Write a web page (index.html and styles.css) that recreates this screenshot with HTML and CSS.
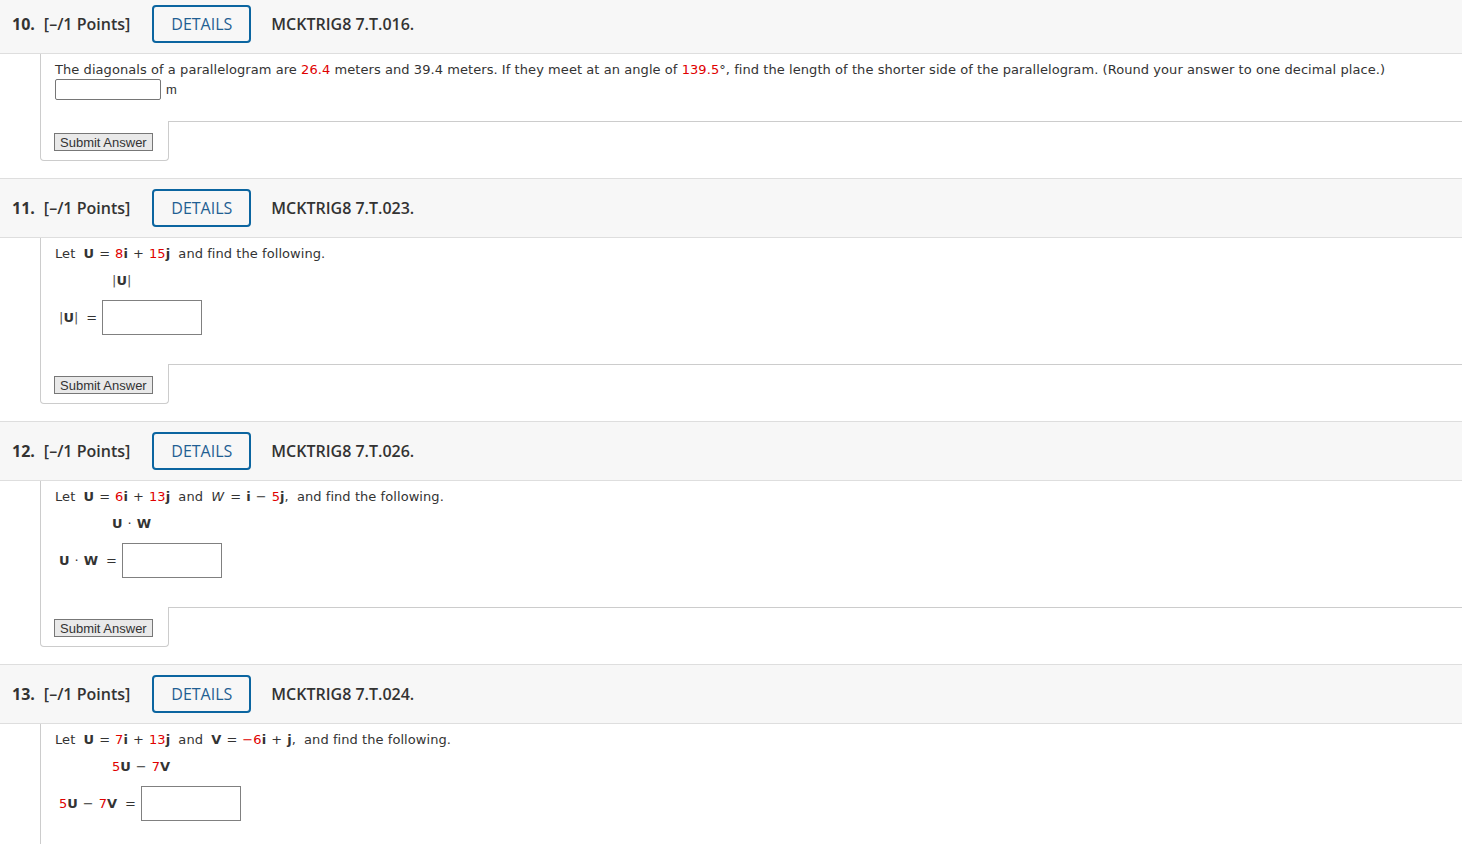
FILE: index.html
```html
<!DOCTYPE html>
<html lang="en">
<head>
    <meta charset="UTF-8">
    <meta name="viewport" content="width=device-width, initial-scale=1.0">
    <title>Assignment</title>
    <link rel="stylesheet" href="styles.css">
</head>
<body>
    <div class="question first">
        <div class="q-head">
            <span class="q-num">10.</span>
            <span class="q-points">[–/1 Points]</span>
            <button class="details">DETAILS</button>
            <span class="q-code">MCKTRIG8 7.T.016.</span>
        </div>
        <div class="q-body">
            <div class="q-content">
                <p class="q-text">The diagonals of a parallelogram are <span class="num">26.4</span> meters and 39.4 meters. If they meet at an angle of <span class="num">139.5</span>°, find the length of the shorter side of the parallelogram. (Round your answer to one decimal place.)</p>
                <div class="unit-row">
                    <input type="text" class="small-input">
                    <span class="unit">m</span>
                </div>
            </div>
            <div class="q-foot">
                <div class="submit-tab"><button class="submit">Submit Answer</button></div>
                <div class="foot-line"></div>
            </div>
        </div>
    </div>

    <div class="question">
        <div class="q-head">
            <span class="q-num">11.</span>
            <span class="q-points">[–/1 Points]</span>
            <button class="details">DETAILS</button>
            <span class="q-code">MCKTRIG8 7.T.023.</span>
        </div>
        <div class="q-body">
            <div class="q-content">
                <p class="q-text">Let <span class="math"><b>U</b><span class="op">=</span><span class="num">8</span><b>i</b><span class="op">+</span><span class="num">15</span><b>j</b></span> and find the following.</p>
                <div class="part">
                    <div class="part-label"><span class="bar">|</span><b>U</b><span class="bar">|</span></div>
                    <div class="answer-row">
                        <span class="ans-label"><span class="bar">|</span><b>U</b><span class="bar">|</span></span>
                        <span class="eq">=</span>
                        <input type="text" class="big-input">
                    </div>
                </div>
            </div>
            <div class="q-foot">
                <div class="submit-tab"><button class="submit">Submit Answer</button></div>
                <div class="foot-line"></div>
            </div>
        </div>
    </div>

    <div class="question">
        <div class="q-head">
            <span class="q-num">12.</span>
            <span class="q-points">[–/1 Points]</span>
            <button class="details">DETAILS</button>
            <span class="q-code">MCKTRIG8 7.T.026.</span>
        </div>
        <div class="q-body">
            <div class="q-content">
                <p class="q-text">Let <span class="math"><b>U</b><span class="op">=</span><span class="num">6</span><b>i</b><span class="op">+</span><span class="num">13</span><b>j</b></span> and <span class="math"><i class="var">W</i><span class="op">=</span><b>i</b><span class="op">−</span><span class="num">5</span><b>j</b>,</span> and find the following.</p>
                <div class="part">
                    <div class="part-label"><b>U</b><span class="op">·</span><b>W</b></div>
                    <div class="answer-row">
                        <span class="ans-label"><b>U</b><span class="op">·</span><b>W</b></span>
                        <span class="eq">=</span>
                        <input type="text" class="big-input">
                    </div>
                </div>
            </div>
            <div class="q-foot">
                <div class="submit-tab"><button class="submit">Submit Answer</button></div>
                <div class="foot-line"></div>
            </div>
        </div>
    </div>

    <div class="question">
        <div class="q-head">
            <span class="q-num">13.</span>
            <span class="q-points">[–/1 Points]</span>
            <button class="details">DETAILS</button>
            <span class="q-code">MCKTRIG8 7.T.024.</span>
        </div>
        <div class="q-body">
            <div class="q-content">
                <p class="q-text">Let <span class="math"><b>U</b><span class="op">=</span><span class="num">7</span><b>i</b><span class="op">+</span><span class="num">13</span><b>j</b></span> and <span class="math"><b>V</b><span class="op">=</span><span class="num">−6</span><b>i</b><span class="op">+</span><b>j</b>,</span> and find the following.</p>
                <div class="part">
                    <div class="part-label"><span class="num">5</span><b>U</b><span class="op">−</span><span class="num">7</span><b>V</b></div>
                    <div class="answer-row">
                        <span class="ans-label"><span class="num">5</span><b>U</b><span class="op">−</span><span class="num">7</span><b>V</b></span>
                        <span class="eq">=</span>
                        <input type="text" class="big-input">
                    </div>
                </div>
            </div>
        </div>
    </div>
</body>
</html>
```

FILE: styles.css
```css
body {
    font-family: "DejaVu Sans", Verdana, sans-serif;
    font-size: 13px;
    color: #333;
    margin: 0;
    padding: 0;
    background: #fff;
    overflow: hidden;
}

.question {
    margin-bottom: 17px;
}

.question.first {
    margin-top: -6px;
}

.q-head {
    display: flex;
    align-items: center;
    height: 58px;
    padding-left: 12px;
    background-color: #f7f7f7;
    border-top: 1px solid #dedede;
    border-bottom: 1px solid #dedede;
    font-family: "Open Sans", sans-serif;
    font-size: 16px;
    color: #333;
}

.q-num {
    font-weight: 700;
    margin-right: 9px;
}

.q-points {
    font-weight: 600;
}

.details {
    font-family: "Open Sans", sans-serif;
    font-size: 16px;
    color: #1f5f93;
    background: transparent;
    border: 2px solid #0b65a0;
    border-radius: 4px;
    height: 38px;
    width: 99px;
    margin: 0 20px 0 22px;
    padding: 0;
    cursor: pointer;
}

.q-code {
    font-weight: 600;
}

.q-body {
    margin-left: 40px;
}

.q-content {
    border-left: 1px solid #cccccc;
    padding: 8px 14px 21px;
}

.q-text {
    margin: 0;
    line-height: 16px;
    letter-spacing: 0.065px;
}

.num {
    color: #e00000;
}

.math {
    margin: 0 4px;
}

.math b,
.part b {
    font-weight: bold;
}

.op {
    margin: 0 5px;
}

.var {
    font-style: italic;
    margin-right: 1px;
}

.bar {
    color: #555;
}

.unit-row {
    display: flex;
    align-items: center;
    margin-top: 1px;
}

.small-input {
    width: 106px;
    height: 21px;
    box-sizing: border-box;
    border: 1px solid #767676;
    border-radius: 2px;
    margin: 0;
    padding: 0 2px;
}

.unit {
    margin-left: 5px;
    font-family: "Liberation Sans", Arial, sans-serif;
}

.part {
    padding-top: 11px;
    margin-bottom: 8px;
}

.part-label {
    padding-left: 57px;
    line-height: 16px;
}

.answer-row {
    display: flex;
    align-items: center;
    margin-top: 11px;
    padding-left: 4px;
}

.eq {
    margin: 0 5px 0 8px;
}

.big-input {
    width: 100px;
    height: 35px;
    box-sizing: border-box;
    border: 1px solid #808080;
    border-radius: 0;
    margin: 0;
}

.q-foot {
    display: flex;
    align-items: flex-start;
}

.submit-tab {
    width: 114px;
    padding: 12px 0 9px 13px;
    border-left: 1px solid #cccccc;
    border-right: 1px solid #cccccc;
    border-bottom: 1px solid #cccccc;
    border-radius: 0 0 4px 4px;
}

.submit {
    display: block;
    font-family: "Liberation Sans", Arial, sans-serif;
    font-size: 13px;
    color: #333;
    background-color: #e9e9e9;
    border: 1px solid #777;
    height: 18px;
    padding: 0 5px;
    line-height: 15px;
    cursor: pointer;
}

.foot-line {
    flex: 1;
    border-top: 1px solid #cccccc;
}
```
